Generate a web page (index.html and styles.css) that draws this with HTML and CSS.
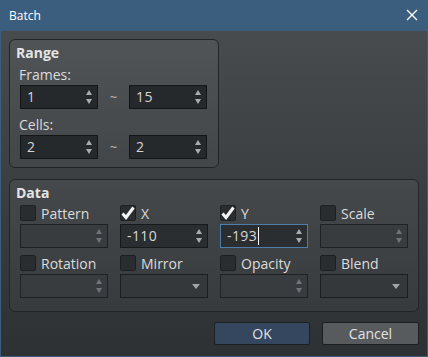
FILE: index.html
```html
<!DOCTYPE html>
<html lang="en">
<head>
  <meta charset="UTF-8">
  <title>Batch</title>
  <link rel="stylesheet" href="styles.css">
</head>
<body>

  <div class="window">

    <!-- TITLE BAR -->
    <div class="titlebar">
      <span class="title">Batch</span>
      <svg class="close" width="12" height="12" viewBox="0 0 12 12">
        <path d="M1 1 L11 11 M11 1 L1 11" stroke="#ffffff" stroke-width="1.4" fill="none"/>
      </svg>
    </div>

    <div class="content">

      <!-- RANGE -->
      <div class="group range">
        <div class="group-title">Range</div>
        <div class="label">Frames:</div>
        <div class="range-row">
          <div class="spin dark"><span class="value">1</span><span class="arrows"></span></div>
          <span class="tilde">~</span>
          <div class="spin dark"><span class="value">15</span><span class="arrows"></span></div>
        </div>
        <div class="label second">Cells:</div>
        <div class="range-row">
          <div class="spin dark"><span class="value">2</span><span class="arrows"></span></div>
          <span class="tilde">~</span>
          <div class="spin dark"><span class="value">2</span><span class="arrows"></span></div>
        </div>
      </div>

      <!-- DATA -->
      <div class="group data">
        <div class="group-title">Data</div>
        <div class="data-grid">
          <div class="field">
            <div class="check-row"><span class="checkbox"></span><span class="check-label">Pattern</span></div>
            <div class="spin disabled"><span class="value"></span><span class="arrows"></span></div>
          </div>
          <div class="field">
            <div class="check-row">
              <span class="checkbox"><svg viewBox="0 0 16 16" width="16" height="16"><path d="M2.5 8.5 L6 12.5 L13.5 2.5" stroke="#f4f4f4" stroke-width="3" fill="none"/></svg></span>
              <span class="check-label">X</span>
            </div>
            <div class="spin"><span class="value">-110</span><span class="arrows"></span></div>
          </div>
          <div class="field">
            <div class="check-row">
              <span class="checkbox"><svg viewBox="0 0 16 16" width="16" height="16"><path d="M2.5 8.5 L6 12.5 L13.5 2.5" stroke="#f4f4f4" stroke-width="3" fill="none"/></svg></span>
              <span class="check-label">Y</span>
            </div>
            <div class="spin focused"><span class="value">-193<span class="caret"></span></span><span class="arrows"></span></div>
          </div>
          <div class="field">
            <div class="check-row"><span class="checkbox"></span><span class="check-label">Scale</span></div>
            <div class="spin disabled"><span class="value"></span><span class="arrows"></span></div>
          </div>
          <div class="field">
            <div class="check-row"><span class="checkbox"></span><span class="check-label">Rotation</span></div>
            <div class="spin disabled"><span class="value"></span><span class="arrows"></span></div>
          </div>
          <div class="field">
            <div class="check-row"><span class="checkbox"></span><span class="check-label">Mirror</span></div>
            <div class="spin combo"><span class="value"></span><span class="drop"></span></div>
          </div>
          <div class="field">
            <div class="check-row"><span class="checkbox"></span><span class="check-label">Opacity</span></div>
            <div class="spin disabled"><span class="value"></span><span class="arrows"></span></div>
          </div>
          <div class="field">
            <div class="check-row"><span class="checkbox"></span><span class="check-label">Blend</span></div>
            <div class="spin combo"><span class="value"></span><span class="drop"></span></div>
          </div>
        </div>
      </div>

      <!-- BUTTONS -->
      <div class="buttons">
        <button class="btn ok">OK</button>
        <button class="btn cancel">Cancel</button>
      </div>

    </div>
  </div>

</body>
</html>
```

FILE: styles.css
```css
html, body {
  margin: 0;
  padding: 0;
  background: #2e3235;
}

.window {
  width: 428px;
  height: 357px;
  box-sizing: border-box;
  border: 1px solid #3b5e80;
  border-top: none;
  display: flex;
  flex-direction: column;
  background: linear-gradient(#4a4e51, #2d3134);
  font-family: "Open Sans", sans-serif;
  font-size: 14px;
  color: #dcdcdc;
}

.titlebar {
  height: 31px;
  flex-shrink: 0;
  margin: 0 -1px;
  background: #3b5e7f;
  display: flex;
  align-items: center;
  justify-content: space-between;
  padding: 0 10px 0 9px;
}

.title {
  font-size: 12px;
  color: #ffffff;
  margin-top: -1px;
}

.close {
  display: block;
  margin-top: -1px;
}

.content {
  flex: 1;
  display: flex;
  flex-direction: column;
  padding: 8px 8px 0 8px;
}

.group {
  border: 1px solid #222527;
  border-radius: 6px;
  background: linear-gradient(rgba(255, 255, 255, 0.05), rgba(255, 255, 255, 0.03));
  padding: 5px 10px 8px 10px;
  line-height: 16px;
}

.group-title {
  font-weight: bold;
  color: #e4e4e4;
  margin-left: -4px;
  height: 16px;
}

/* RANGE */

.range {
  width: 188px;
}

.label {
  margin-top: 6px;
  margin-left: -1px;
  margin-bottom: 2px;
}

.label.second {
  margin-top: 8px;
}

.range-row {
  display: flex;
  align-items: center;
}

.range-row .spin {
  width: 78px;
}

.tilde {
  width: 31px;
  text-align: center;
  color: #b8b8b8;
  font-size: 13px;
}

/* SPIN BOXES */

.spin {
  height: 24px;
  box-sizing: border-box;
  border: 1px solid #17191b;
  background: #2b2e31;
  display: flex;
  align-items: center;
  justify-content: space-between;
  padding: 0 5px 0 6px;
  color: #d6d6d6;
}

.spin.dark {
  background: #26292c;
  border-color: #141517;
}

.spin.disabled {
  background: #393c3f;
  border-color: #1f2123;
}

.spin.combo {
  background: #35383b;
  border-color: #1c1e20;
}

.spin.focused {
  border-color: #4f7ca8;
}

.value {
  display: flex;
  align-items: center;
  height: 16px;
  letter-spacing: 0.4px;
}

.caret {
  display: inline-block;
  width: 1px;
  height: 18px;
  margin-left: 1px;
  background: #ffffff;
}

.arrows {
  width: 6px;
  height: 16px;
  position: relative;
}

.arrows::before, .arrows::after {
  content: "";
  position: absolute;
  left: 0;
  border-left: 3px solid transparent;
  border-right: 3px solid transparent;
}

.arrows::before {
  top: 1px;
  border-bottom: 5px solid #a9adb1;
}

.arrows::after {
  bottom: 1px;
  border-top: 5px solid #a9adb1;
}

.disabled .arrows::before {
  border-bottom-color: #70747a;
}

.disabled .arrows::after {
  border-top-color: #70747a;
}

.drop {
  width: 0;
  height: 0;
  border-left: 4px solid transparent;
  border-right: 4px solid transparent;
  border-top: 5px solid #a0a4a8;
  margin-right: 2px;
}

/* DATA */

.data {
  margin-top: 11px;
  padding-bottom: 13px;
}

.data-grid {
  display: grid;
  grid-template-columns: repeat(4, 88px);
  column-gap: 12px;
  row-gap: 7px;
  margin-top: 4px;
}

.field {
  display: flex;
  flex-direction: column;
  gap: 3px;
}

.check-row {
  display: flex;
  align-items: center;
  height: 16px;
  gap: 5px;
}

.check-label {
  padding-top: 2px;
}

.checkbox {
  width: 16px;
  height: 16px;
  box-sizing: border-box;
  border: 1px solid #1d1f21;
  border-radius: 2px;
  background: #2a2d30;
  position: relative;
}

.checkbox svg {
  position: absolute;
  left: -1px;
  top: -1px;
}

/* BUTTONS */

.buttons {
  display: flex;
  justify-content: flex-end;
  gap: 12px;
  margin-top: 10px;
}

.btn {
  width: 97px;
  height: 23px;
  border: 1px solid #1c1e20;
  border-radius: 2px;
  font-family: "Open Sans", sans-serif;
  font-size: 14px;
  color: #e2e2e2;
  padding: 0;
  cursor: pointer;
}

.btn.ok {
  width: 96px;
  background: #34475e;
}

.btn.cancel {
  background: #585b5e;
}
```
